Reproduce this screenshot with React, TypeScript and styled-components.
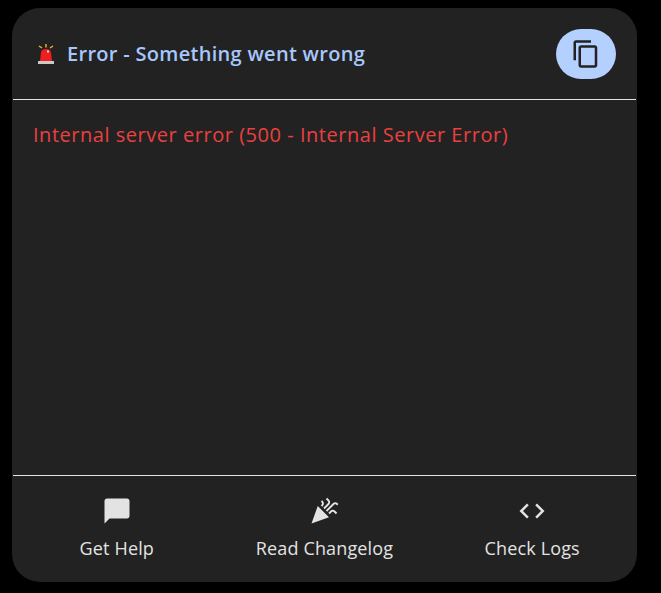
import React from "react";
import styled, { createGlobalStyle } from "styled-components";

const Global = createGlobalStyle`
  html, body { margin: 0; padding: 0; background: #000; }
  body { font-family: "Open Sans", "Noto Sans", sans-serif; }
`;

const Card = styled.main`
  box-sizing: border-box;
  width: 625px;
  height: 574px;
  margin: 8px 0 0 12px;
  background: #222222;
  border-radius: 28px;
  display: flex;
  flex-direction: column;
`;

const Header = styled.header`
  box-sizing: border-box;
  height: 92px;
  margin: 0 1px;
  padding: 0 20px 0 23px;
  border-bottom: 1px solid #e3e3e3;
  display: flex;
  align-items: center;
  justify-content: space-between;
`;

const Title = styled.h1`
  margin: 0;
  display: flex;
  align-items: center;
  gap: 11px;
  font-size: 20px;
  line-height: 24px;
  font-weight: 600;
  letter-spacing: 0.3px;
  color: #a8c7fa;
`;

const CopyButton = styled.button`
  width: 60px;
  height: 50px;
  padding: 0;
  border: 0;
  border-radius: 25px;
  background: #b3d0ff;
  color: #222222;
  display: flex;
  align-items: center;
  justify-content: center;
`;

const Body = styled.section`
  flex: 1;
  padding: 22px 20px 22px 21px;
`;

const ErrorText = styled.p`
  margin: 0;
  font-size: 20px;
  line-height: 26px;
  letter-spacing: 0.53px;
  color: #ea4040;
`;

const Footer = styled.footer`
  box-sizing: border-box;
  height: 107px;
  border-top: 1px solid #e3e3e3;
  margin: 0 1px;
  display: grid;
  grid-template-columns: repeat(3, 1fr);
`;

const Action = styled.a`
  padding-top: 20px;
  display: flex;
  flex-direction: column;
  align-items: center;
  gap: 12px;
  color: #e3e3e3;
  font-size: 18px;
  line-height: 20px;
  letter-spacing: 0.15px;
`;

const Icon = ({ d, size = 30 }: { d: string; size?: number }) => (
  <svg width={size} height={size} viewBox="0 0 24 24" fill="currentColor" aria-hidden="true">
    <path d={d} />
  </svg>
);

const Siren = () => (
  <svg width="20" height="22" viewBox="0 0 20 22" aria-hidden="true">
    <path d="M2 21h16v-3H2z" fill="#c9c9c9" />
    <path d="M4 18 5 9.4Q5.6 6 10 6t5 3.4l1 8.6z" fill="#f01f1f" />
    <path d="M11 7.5h2v2h-2z" fill="#ffd0d0" />
    <path d="M9.3 1h1.4v3.4H9.3zM2.6 3.4l.8-1 3 2.2-.8 1zM17.4 3.4l-.8-1-3 2.2.8 1z" fill="#e8b92e" />
  </svg>
);

const paths = {
  copy: "M16 1H4c-1.1 0-2 .9-2 2v14h2V3h12V1zm3 4H8c-1.1 0-2 .9-2 2v14c0 1.1.9 2 2 2h11c1.1 0 2-.9 2-2V7c0-1.1-.9-2-2-2zm0 16H8V7h11v14z",
  chat: "M20 2H4c-1.1 0-2 .9-2 2v18l4-4h14c1.1 0 2-.9 2-2V4c0-1.1-.9-2-2-2z",
  party: "M2 22l14-5-9-9zM14.53 12.53l5.59-5.59c.49-.49 1.28-.49 1.77 0l.59.59 1.06-1.06-.59-.59c-1.07-1.07-2.82-1.07-3.89 0l-5.59 5.59 1.06 1.06zM10.06 6.88l-.59.59 1.06 1.06.59-.59c1.07-1.07 1.07-2.82 0-3.89l-.59-.59-1.06 1.07.59.59c.48.48.48 1.28 0 1.76zM17.06 11.88l-1.59 1.59 1.06 1.06 1.59-1.59c.49-.49 1.28-.49 1.77 0l1.61 1.61 1.06-1.06-1.61-1.61c-1.08-1.07-2.82-1.07-3.89 0zM15.06 5.88l-3.59 3.59 1.06 1.06 3.59-3.59c1.07-1.07 1.07-2.82 0-3.89l-1.59-1.59-1.06 1.06 1.59 1.59c.48.49.48 1.29 0 1.77z",
  code: "M9.4 16.6L4.8 12l4.6-4.6L8 6l-6 6 6 6 1.4-1.4zm5.2 0l4.6-4.6-4.6-4.6L16 6l6 6-6 6-1.4-1.4z",
};

export default function App() {
  return (
    <>
      <Global />
      <Card>
        <Header>
          <Title>
            <Siren />
            Error - Something went wrong
          </Title>
          <CopyButton aria-label="Copy">
            <Icon d={paths.copy} />
          </CopyButton>
        </Header>
        <Body>
          <ErrorText>Internal server error (500 - Internal Server Error)</ErrorText>
        </Body>
        <Footer>
          <Action>
            <Icon d={paths.chat} />
            Get Help
          </Action>
          <Action>
            <Icon d={paths.party} />
            Read Changelog
          </Action>
          <Action>
            <Icon d={paths.code} />
            Check Logs
          </Action>
        </Footer>
      </Card>
    </>
  );
}
